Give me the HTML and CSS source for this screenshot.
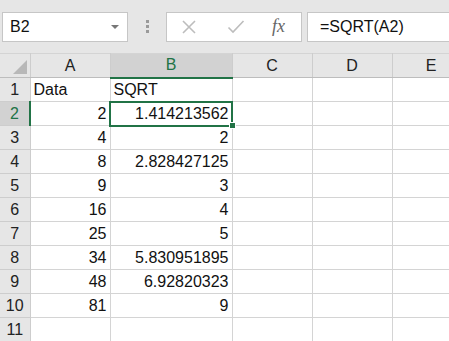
FILE: index.html
```html
<!DOCTYPE html>
<html lang="en">
<head>
    <meta charset="UTF-8">
    <title>Book1 - Excel</title>
    <link rel="stylesheet" href="styles.css">
</head>
<body>
    <div class="formula-bar">
        <div class="name-box">
            <span>B2</span>
            <span class="caret"></span>
        </div>
        <div class="grip"><i></i><i></i><i></i></div>
        <div class="buttons">
            <svg class="btn-icon" width="16" height="16" viewBox="0 0 16 16">
                <path d="M2 2 L14 14 M14 2 L2 14" stroke="#bdbdbd" stroke-width="1.6" fill="none"/>
            </svg>
            <svg class="btn-icon" width="18" height="16" viewBox="0 0 18 16">
                <path d="M1.5 8.5 L6 13 L16.5 2" stroke="#bdbdbd" stroke-width="1.6" fill="none"/>
            </svg>
            <span class="fx">fx</span>
        </div>
        <div class="formula">=SQRT(A2)</div>
    </div>

    <table class="sheet">
        <colgroup>
            <col class="c-row"><col class="c-a"><col class="c-b"><col class="c-c"><col class="c-d"><col class="c-e">
        </colgroup>
        <tr class="heads">
            <th class="corner"><span class="tri"></span></th>
            <th>A</th>
            <th class="sel">B</th>
            <th>C</th>
            <th>D</th>
            <th>E</th>
        </tr>
        <tr><th>1</th><td class="txt">Data</td><td class="txt">SQRT</td><td></td><td></td><td></td></tr>
        <tr><th class="sel">2</th><td>2</td><td class="active">1.414213562</td><td></td><td></td><td></td></tr>
        <tr><th>3</th><td>4</td><td>2</td><td></td><td></td><td></td></tr>
        <tr><th>4</th><td>8</td><td>2.828427125</td><td></td><td></td><td></td></tr>
        <tr><th>5</th><td>9</td><td>3</td><td></td><td></td><td></td></tr>
        <tr><th>6</th><td>16</td><td>4</td><td></td><td></td><td></td></tr>
        <tr><th>7</th><td>25</td><td>5</td><td></td><td></td><td></td></tr>
        <tr><th>8</th><td>34</td><td>5.830951895</td><td></td><td></td><td></td></tr>
        <tr><th>9</th><td>48</td><td>6.92820323</td><td></td><td></td><td></td></tr>
        <tr><th>10</th><td>81</td><td>9</td><td></td><td></td><td></td></tr>
        <tr><th>11</th><td></td><td></td><td></td><td></td><td></td></tr>
    </table>
</body>
</html>
```

FILE: styles.css
```css
body {
    margin: 0;
    width: 449px;
    height: 341px;
    overflow: hidden;
    background-color: #fff;
    font-family: "Liberation Sans", Arial, sans-serif;
    color: #111;
}
.formula-bar {
    display: flex;
    align-items: center;
    height: 53px;
    padding: 0 0 0 2px;
    background-color: #e6e6e6;
    box-sizing: border-box;
}
.name-box {
    width: 126px;
    height: 30px;
    box-sizing: border-box;
    border: 1px solid #c6c6c6;
    background-color: #fff;
    display: flex;
    align-items: center;
    justify-content: space-between;
    padding: 0 8px 0 7px;
    font-size: 16px;
}
.caret {
    width: 0;
    height: 0;
    border-left: 4px solid transparent;
    border-right: 4px solid transparent;
    border-top: 4px solid #777;
}
.grip {
    width: 38px;
    display: flex;
    flex-direction: column;
    align-items: center;
    gap: 2px;
}
.grip i {
    width: 3px;
    height: 3px;
    background-color: #9a9a9a;
}
.buttons {
    width: 136px;
    height: 30px;
    box-sizing: border-box;
    border: 1px solid #c6c6c6;
    background-color: #fff;
    display: flex;
    align-items: center;
    padding-left: 14px;
    gap: 30px;
}
.fx {
    font-family: "Liberation Serif", serif;
    font-style: italic;
    font-size: 18px;
    color: #666;
    margin-left: -3px;
}
.formula {
    flex: 1;
    margin-left: 5px;
    height: 30px;
    box-sizing: border-box;
    border: 1px solid #c6c6c6;
    border-right: none;
    background-color: #fff;
    display: flex;
    align-items: center;
    padding-left: 12px;
    font-size: 16px;
}
.sheet {
    border-collapse: collapse;
    table-layout: fixed;
    width: 470px;
    font-size: 16px;
}
.c-row { width: 30px; }
.c-a { width: 80px; }
.c-b { width: 122px; }
.c-c { width: 80px; }
.c-d { width: 80px; }
.c-e { width: 78px; }
.sheet tr {
    height: 24px;
}
.sheet th {
    background-color: #e6e6e6;
    font-weight: normal;
    color: #222;
    padding: 0;
    border: 1px solid #cdcdcd;
    border-left: none;
    border-top: none;
    text-align: center;
}
.sheet td {
    border: 1px solid #d4d4d4;
    padding: 0 3px;
    text-align: right;
    white-space: nowrap;
    overflow: visible;
}
.sheet td.txt {
    text-align: left;
}
.heads th {
    border-top: 1px solid #d4d4d4;
    border-bottom: 1px solid #bdbdbd;
}
.heads th.sel {
    background-color: #d2d2d2;
    color: #217346;
    border-bottom: 2px solid #217346;
}
.sheet th.sel {
    background-color: #d2d2d2;
    color: #217346;
}
.sheet tr th.sel:first-child {
    border-right: 2px solid #217346;
}
.corner {
    position: relative;
}
.tri {
    position: absolute;
    right: 3px;
    bottom: 3px;
    width: 0;
    height: 0;
    border-left: 14px solid transparent;
    border-bottom: 14px solid #b8b8b8;
}
.active {
    position: relative;
    outline: 2px solid #217346;
    outline-offset: -1px;
}
.active::after {
    content: "";
    position: absolute;
    right: -4px;
    bottom: -4px;
    width: 5px;
    height: 5px;
    background-color: #217346;
    border: 1px solid #fff;
}
```
